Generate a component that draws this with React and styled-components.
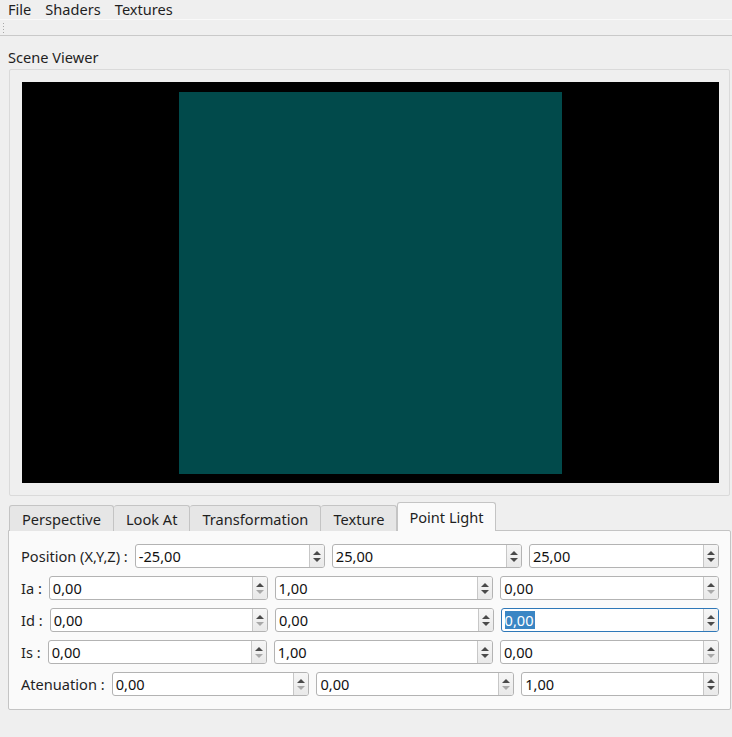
import React from 'react';
import styled, { createGlobalStyle, css } from 'styled-components';

const GlobalStyle = createGlobalStyle`
  html, body {
    margin: 0;
    padding: 0;
    background: #efefef;
  }
  body {
    font-family: "Noto Sans", "Open Sans", sans-serif;
    font-size: 14.6px;
    color: #1f1f1f;
  }
`;

const Window = styled.div`
  width: 732px;
  height: 737px;
  display: flex;
  flex-direction: column;
  background: #efefef;
  overflow: hidden;
`;

const MenuBar = styled.div`
  height: 19px;
  display: flex;
  align-items: center;
  padding-left: 1px;
  border-bottom: 1px solid #f9f9f9;
`;

const MenuItem = styled.div`
  padding: 0 7px;
  line-height: 19px;
`;

const ToolBar = styled.div`
  height: 15px;
  border-bottom: 1px solid #c9c9c9;
  display: flex;
  align-items: center;
  padding-left: 2px;
`;

const Handle = styled.div`
  width: 3px;
  height: 11px;
  background-image: radial-gradient(circle, #a8a8a8 0.7px, transparent 0.8px);
  background-size: 3px 3px;
`;

const Central = styled.div`
  flex: 1;
  display: flex;
  flex-direction: column;
  padding: 12px 1px 0 8px;
`;

const GroupTitle = styled.div`
  line-height: 18px;
  margin-bottom: 2px;
`;

const GroupFrame = styled.div`
  margin: 1px 1px 0 1px;
  border: 1px solid #dadada;
  border-radius: 2px;
  padding: 12px 10px 12px 12px;
`;

const Viewport = styled.div`
  height: 401px;
  background: #000;
  display: flex;
  align-items: center;
  justify-content: center;
`;

const Square = styled.div`
  width: 383px;
  height: 382px;
  background: #014a4b;
`;

const Tabs = styled.div`
  margin-top: 7px;
  display: flex;
  flex-direction: column;
`;

const TabBar = styled.div`
  display: flex;
  align-items: flex-end;
  padding-left: 1px;
  height: 28px;
  position: relative;
  z-index: 1;
  margin-bottom: -1px;
`;

const Tab = styled.div`
  height: 26px;
  line-height: 26px;
  padding: 0 12px;
  background: #e6e6e6;
  border: 1px solid #c4c4c4;
  border-bottom: none;
  border-left-width: ${p => (p.first ? '1px' : '0')};
  border-radius: 3px 3px 0 0;
  box-sizing: border-box;
  ${p => p.active && css`
    height: 29px;
    line-height: 28px;
    background: #fafafa;
    border-left-width: 1px;
    border-right-width: 1px;
    padding: 0 11px;
  `}
`;

const Pane = styled.div`
  height: 180px;
  box-sizing: border-box;
  background: #fafafa;
  border: 1px solid #c4c4c4;
  border-radius: 0 2px 2px 2px;
  padding: 13px 11px 0 12px;
  display: flex;
  flex-direction: column;
  gap: 8px;
`;

const Row = styled.div`
  display: flex;
  align-items: center;
  gap: 7px;
  height: 24px;
`;

const Label = styled.div`
  white-space: nowrap;
`;

const SpinBox = styled.div`
  flex: 1;
  height: 24px;
  box-sizing: border-box;
  display: flex;
  background: #fff;
  border: 1px solid ${p => (p.focused ? '#2f78b8' : '#b3b3b3')};
  border-radius: 3px;
  overflow: hidden;
`;

const Value = styled.div`
  flex: 1;
  display: flex;
  align-items: center;
  padding-left: 3px;
  color: #111;
`;

const Selected = styled.span`
  background: #3a86c4;
  color: #fff;
  line-height: 18px;
  padding-right: 1px;
`;

const Arrows = styled.div`
  width: 14px;
  border-left: 1px solid #c7c7c7;
  background: linear-gradient(to bottom, #f6f6f6, #e9e9e9);
  display: flex;
  flex-direction: column;
  align-items: center;
  justify-content: center;
  gap: 3px;
`;

const Arrow = styled.div`
  width: 0;
  height: 0;
  border-left: 4px solid transparent;
  border-right: 4px solid transparent;
  ${p => (p.down
    ? css`border-top: 4px solid ${p.off ? '#a9a9a9' : '#4a4a4a'};`
    : css`border-bottom: 4px solid #4a4a4a;`)}
`;

const Spin = ({ value, downOff, focused }) => (
  <SpinBox focused={focused}>
    <Value>{focused ? <Selected>{value}</Selected> : value}</Value>
    <Arrows>
      <Arrow />
      <Arrow down off={downOff} />
    </Arrows>
  </SpinBox>
);

const rows = [
  { label: 'Position (X,Y,Z) :', spins: [{ value: '-25,00' }, { value: '25,00' }, { value: '25,00' }] },
  { label: 'Ia :', spins: [{ value: '0,00', downOff: true }, { value: '1,00' }, { value: '0,00', downOff: true }] },
  { label: 'Id :', spins: [{ value: '0,00', downOff: true }, { value: '0,00' }, { value: '0,00', focused: true }] },
  { label: 'Is :', spins: [{ value: '0,00', downOff: true }, { value: '1,00' }, { value: '0,00', downOff: true }] },
  { label: 'Atenuation :', spins: [{ value: '0,00', downOff: true }, { value: '0,00', downOff: true }, { value: '1,00' }] },
];

const tabs = ['Perspective', 'Look At', 'Transformation', 'Texture', 'Point Light'];

export default function App() {
  return (
    <Window>
      <GlobalStyle />
      <MenuBar>
        <MenuItem>File</MenuItem>
        <MenuItem>Shaders</MenuItem>
        <MenuItem>Textures</MenuItem>
      </MenuBar>
      <ToolBar>
        <Handle />
      </ToolBar>
      <Central>
        <GroupTitle>Scene Viewer</GroupTitle>
        <GroupFrame>
          <Viewport>
            <Square />
          </Viewport>
        </GroupFrame>
        <Tabs>
          <TabBar>
            {tabs.map((t, i) => (
              <Tab key={t} first={i === 0} active={t === 'Point Light'}>{t}</Tab>
            ))}
          </TabBar>
          <Pane>
            {rows.map(r => (
              <Row key={r.label}>
                <Label>{r.label}</Label>
                {r.spins.map((s, i) => (
                  <Spin key={i} {...s} />
                ))}
              </Row>
            ))}
          </Pane>
        </Tabs>
      </Central>
    </Window>
  );
}
